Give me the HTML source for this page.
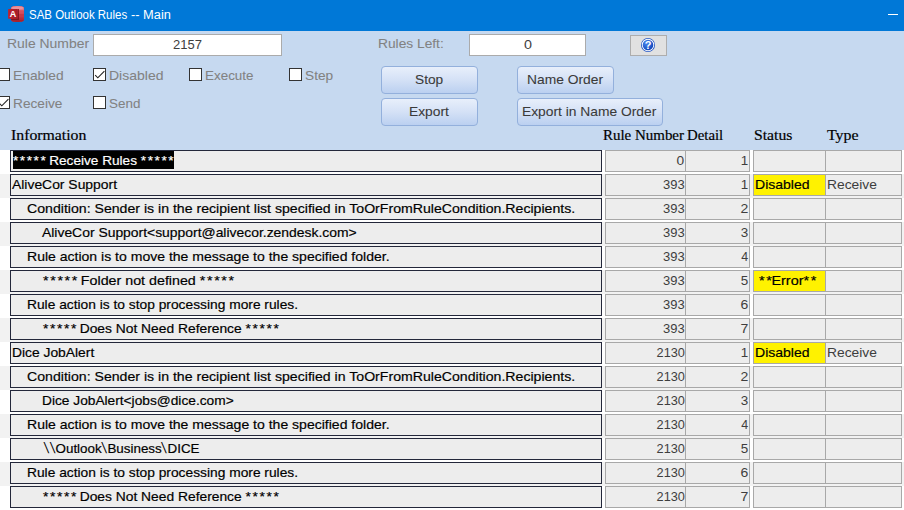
<!DOCTYPE html>
<html lang="en"><head><meta charset="utf-8"><title>SAB Outlook Rules -- Main</title>
<style>
html,body{margin:0;padding:0}
body{width:904px;height:510px;overflow:hidden;position:relative;background:#fff;font-family:'Liberation Sans',sans-serif;font-size:13px;color:#000}
.abs{position:absolute}
.t{-webkit-text-stroke:0.18px;position:absolute;white-space:pre;display:inline-block;transform-origin:0 50%;line-height:16px;height:16px}
.r{transform-origin:100% 50%}
#title{position:absolute;left:0;top:0;width:904px;height:31px;background:#0078d7}
#hdr{position:absolute;left:0;top:31px;width:904px;height:119px;background:#c6d9f0}
.lbl{color:#828282;-webkit-text-stroke:0.06px}
.inp{position:absolute;box-sizing:border-box;background:#fff;border:1px solid #ababab;height:22px;top:34px}
.cb{position:absolute;box-sizing:border-box;width:13px;height:13px;background:#fff;border:1px solid #333}
.btn{position:absolute;box-sizing:border-box;height:28px;border:1px solid #93b0dc;border-radius:4px;background:linear-gradient(#e8effb 0%,#d4e1f6 50%,#bbd0f0 100%)}
.btn .t{color:#3c3c3c}
.hs{font-family:'Liberation Serif',serif;font-size:14px;color:#000}
.stripe{position:absolute;left:0;width:904px;height:24px}
.bx{position:absolute;box-sizing:border-box;top:0;height:22px;background:#ededed}
.info{left:10px;width:592px;border:1px solid #23273a}
.num{border:1px solid #a8a8a8}
.as{letter-spacing:1.5px;margin-right:-1.9px}
.bs{display:inline-block;width:5.6px;-webkit-text-stroke:0;transform:translateX(1px) skewX(10deg) scaleY(1.18);transform-origin:1.8px 62%}
.g{color:#3e3e3e;-webkit-text-stroke:0}
.ns{-webkit-text-stroke:0}
.bt{color:#3a3a3a;-webkit-text-stroke:0.08px}
</style></head><body>
<div id="title">
<svg class="abs" style="left:7px;top:5px" width="18" height="18" viewBox="0 0 18 18">
<defs><linearGradient id="sq" x1="0" x2="1" y1="0" y2="0"><stop offset="0" stop-color="#c2222e"/><stop offset="1" stop-color="#a51b27"/></linearGradient></defs>
<path d="M4.1 3 C4.1 1.7 6.8 1 10.5 1 C14.2 1 16.9 1.7 16.9 3 V15 C16.9 16.3 14.2 17 10.5 17 C6.8 17 4.1 16.3 4.1 15 Z" fill="#c73846"/>
<path d="M4.1 3 C4.1 1.7 6.8 1 10.5 1 C14.2 1 16.9 1.7 16.9 3 V6 H4.1 Z" fill="#e27a86"/>
<ellipse cx="10.5" cy="2.9" rx="6" ry="1.5" fill="#ea939d"/>
<rect x="4.1" y="5.2" width="12.8" height="4" fill="#d64e5c"/>
<rect x="4.1" y="8.8" width="12.8" height="4" fill="#c73846"/>
<rect x="4.1" y="12.5" width="12.8" height="2.6" fill="#b72c3a"/>
<path d="M4.1 14.7 H16.9 V15 C16.9 16.3 14.2 17 10.5 17 C6.8 17 4.1 16.3 4.1 15 Z" fill="#a6232f"/>
<path d="M4.1 13.5 H10.6 V4.1 H12 V14.9 H4.1 Z" fill="#741019" opacity="0.8"/>
<rect x="1.1" y="4.1" width="9.7" height="9.6" rx="0.5" fill="url(#sq)"/>
<text x="5.95" y="12.3" font-family="Liberation Sans, sans-serif" font-weight="bold" font-size="9" fill="#fff" text-anchor="middle">A</text>
</svg>
<span class="t ns" id="ttl" style="transform:scaleX(0.9554);left:29.00px;top:7px;font-size:12px;color:#fff">SAB Outlook Rules</span><span class="t ns" id="ttl2" style="transform:scaleX(1.0687);left:131.00px;top:7px;font-size:12px;color:#fff">-- Main</span>
<div class="abs" style="left:888px;top:14px;width:10px;height:1px;background:#fff"></div>
</div>
<div id="hdr"></div>
<span class="t lbl" id="l_rn" style="transform:scaleX(1.0722);left:7.00px;top:35.5px;">Rule Number</span>
<div class="inp" style="left:93px;width:189px"></div>
<span class="t g" id="v_rn" style="transform:scaleX(1.0018);left:173.00px;top:36.5px;">2157</span>
<span class="t lbl" id="l_rl" style="transform:scaleX(1.0583);left:378.00px;top:35.5px;">Rules Left:</span>
<div class="inp" style="left:469px;width:117px"></div>
<span class="t g" id="v_rl" style="transform:scaleX(1.1042);left:524.00px;top:36.5px;">0</span>
<div class="abs" style="left:630px;top:35px;width:37px;height:21px;box-sizing:border-box;background:#e1e1e1;border:1px solid #adadad"></div>
<svg class="abs" style="left:640px;top:37px" width="16" height="16" viewBox="0 0 16 16">
<defs><radialGradient id="hg" cx="0.35" cy="0.3" r="0.8"><stop offset="0" stop-color="#4d8af0"/><stop offset="1" stop-color="#0b3fb5"/></radialGradient></defs>
<circle cx="8" cy="8" r="7" fill="#2457c5"/><circle cx="8" cy="8" r="6.2" fill="#fff"/><circle cx="8" cy="8" r="5.3" fill="url(#hg)"/>
<text x="8" y="11.9" font-family="Liberation Sans, sans-serif" font-weight="bold" font-size="11" fill="#fff" text-anchor="middle">?</text>
</svg>
<div class="cb" style="left:-3px;top:68px"></div>
<span class="t lbl" id="c_en" style="transform:scaleX(1.0620);left:13.00px;top:67.5px;">Enabled</span>
<div class="cb" style="left:93px;top:68px"><svg class="abs" style="left:0;top:0" width="11" height="11" viewBox="0 0 11 11"><path d="M1.2 6.2 L3.8 8.8 L10.4 2.2" fill="none" stroke="#222" stroke-width="1.1"/></svg></div>
<span class="t lbl" id="c_di" style="transform:scaleX(1.0769);left:109.00px;top:67.5px;">Disabled</span>
<div class="cb" style="left:189px;top:68px"></div>
<span class="t lbl" id="c_ex" style="transform:scaleX(1.0330);left:205.00px;top:67.5px;">Execute</span>
<div class="cb" style="left:289px;top:68px"></div>
<span class="t lbl" id="c_st" style="transform:scaleX(1.0524);left:305.00px;top:67.5px;">Step</span>
<div class="cb" style="left:-3px;top:96px"><svg class="abs" style="left:0;top:0" width="11" height="11" viewBox="0 0 11 11"><path d="M1.2 6.2 L3.8 8.8 L10.4 2.2" fill="none" stroke="#222" stroke-width="1.1"/></svg></div>
<span class="t lbl" id="c_re" style="transform:scaleX(1.0528);left:13.00px;top:96.0px;">Receive</span>
<div class="cb" style="left:93px;top:96px"></div>
<span class="t lbl" id="c_se" style="transform:scaleX(1.0345);left:109.00px;top:96.0px;">Send</span>
<div class="btn" style="left:381px;top:66px;width:97px"></div><span class="t bt" id="b_stop" style="transform:scaleX(1.0531);left:415.00px;top:72.0px;">Stop</span>
<div class="btn" style="left:381px;top:98px;width:97px"></div><span class="t bt" id="b_exp" style="transform:scaleX(1.0617);left:409.00px;top:104.0px;">Export</span>
<div class="btn" style="left:517px;top:66px;width:97px"></div><span class="t bt" id="b_no" style="transform:scaleX(1.0624);left:527.00px;top:72.0px;">Name Order</span>
<div class="btn" style="left:517px;top:98px;width:146px"></div><span class="t bt" id="b_eno" style="transform:scaleX(1.0623);left:522.00px;top:104.0px;">Export in Name Order</span>
<span class="t hs" id="h_info" style="transform:scaleX(1.1276);left:11.00px;top:127.5px">Information</span>
<span class="t hs" id="h_rn" style="transform:scaleX(1.0682);left:603.00px;top:127.5px">Rule Number</span>
<span class="t hs" id="h_det" style="transform:scaleX(1.0578);left:687.00px;top:127.5px">Detail</span>
<span class="t hs" id="h_sta" style="transform:scaleX(1.1212);left:754.00px;top:127.5px">Status</span>
<span class="t hs" id="h_typ" style="transform:scaleX(1.1358);left:827.00px;top:127.5px">Type</span>
<div class="stripe" style="top:150px;background:#fff">
<div class="bx info"></div>
<div class="bx num" style="left:605px;width:81px"></div><div class="bx num" style="left:685px;width:65px"></div>
<div class="bx num" style="left:753px;width:73px"></div><div class="bx num" style="left:825px;width:77px"></div>
<div class="abs" style="left:13px;top:1px;width:161px;height:18px;background:#000"></div>
<span class="t" id="i0" style="transform:scaleX(1.0480);left:13.00px;top:2.5px;color:#fff;"><span class="as">*****</span> Receive Rules <span class="as">*****</span></span>
<span class="t r g" id="n0" style="transform:scaleX(1.0562);right:220.00px;top:2.5px">0</span>
<span class="t r g" id="d0" style="transform:scaleX(1.0283);right:156.00px;top:2.5px">1</span>
</div>
<div class="stripe" style="top:174px;background:#f2f2f2">
<div class="bx info"></div>
<div class="bx num" style="left:605px;width:81px"></div><div class="bx num" style="left:685px;width:65px"></div>
<div class="bx num" style="left:753px;width:73px"></div><div class="bx num" style="left:825px;width:77px"></div>
<span class="t" id="i1" style="transform:scaleX(1.0687);left:12.00px;top:2.5px;">AliveCor Support</span>
<span class="t r g" id="n1" style="transform:scaleX(0.9979);right:219.00px;top:2.5px">393</span>
<span class="t r g" id="d1" style="transform:scaleX(1.0283);right:156.00px;top:2.5px">1</span>
<div class="abs" style="left:754px;top:1px;width:71px;height:20px;background:#fff200"></div>
<span class="t" id="s1" style="transform:scaleX(1.0790);left:755.00px;top:2.5px">Disabled</span>
<span class="t g" id="y1" style="transform:scaleX(1.0627);left:827.00px;top:2.5px">Receive</span>
</div>
<div class="stripe" style="top:198px;background:#fff">
<div class="bx info"></div>
<div class="bx num" style="left:605px;width:81px"></div><div class="bx num" style="left:685px;width:65px"></div>
<div class="bx num" style="left:753px;width:73px"></div><div class="bx num" style="left:825px;width:77px"></div>
<span class="t" id="i2" style="transform:scaleX(1.0858);left:27.00px;top:2.5px;">Condition: Sender is in the recipient list specified in ToOrFromRuleCondition.Recipients.</span>
<span class="t r g" id="n2" style="transform:scaleX(0.9979);right:219.00px;top:2.5px">393</span>
<span class="t r g" id="d2" style="transform:scaleX(1.0791);right:156.00px;top:2.5px">2</span>
</div>
<div class="stripe" style="top:222px;background:#f2f2f2">
<div class="bx info"></div>
<div class="bx num" style="left:605px;width:81px"></div><div class="bx num" style="left:685px;width:65px"></div>
<div class="bx num" style="left:753px;width:73px"></div><div class="bx num" style="left:825px;width:77px"></div>
<span class="t" id="i3" style="transform:scaleX(1.0691);left:42.00px;top:2.5px;">AliveCor Support&lt;support@alivecor.zendesk.com&gt;</span>
<span class="t r g" id="n3" style="transform:scaleX(0.9979);right:219.00px;top:2.5px">393</span>
<span class="t r g" id="d3" style="transform:scaleX(1.0324);right:156.00px;top:2.5px">3</span>
</div>
<div class="stripe" style="top:246px;background:#fff">
<div class="bx info"></div>
<div class="bx num" style="left:605px;width:81px"></div><div class="bx num" style="left:685px;width:65px"></div>
<div class="bx num" style="left:753px;width:73px"></div><div class="bx num" style="left:825px;width:77px"></div>
<span class="t" id="i4" style="transform:scaleX(1.0790);left:27.00px;top:2.5px;">Rule action is to move the message to the specified folder.</span>
<span class="t r g" id="n4" style="transform:scaleX(0.9979);right:219.00px;top:2.5px">393</span>
<span class="t r g" id="d4" style="transform:scaleX(0.9546);right:156.00px;top:2.5px">4</span>
</div>
<div class="stripe" style="top:270px;background:#f2f2f2">
<div class="bx info"></div>
<div class="bx num" style="left:605px;width:81px"></div><div class="bx num" style="left:685px;width:65px"></div>
<div class="bx num" style="left:753px;width:73px"></div><div class="bx num" style="left:825px;width:77px"></div>
<span class="t" id="i5" style="transform:scaleX(1.0968);left:43.00px;top:2.5px;"><span class="as">*****</span> Folder not defined <span class="as">*****</span></span>
<span class="t r g" id="n5" style="transform:scaleX(0.9979);right:219.00px;top:2.5px">393</span>
<span class="t r g" id="d5" style="transform:scaleX(1.0324);right:156.00px;top:2.5px">5</span>
<div class="abs" style="left:754px;top:1px;width:71px;height:20px;background:#fff200"></div>
<span class="t" id="s5" style="transform:scaleX(1.1073);left:759.00px;top:2.5px"><span class="as">**</span>Error<span class="as">**</span></span>
</div>
<div class="stripe" style="top:294px;background:#fff">
<div class="bx info"></div>
<div class="bx num" style="left:605px;width:81px"></div><div class="bx num" style="left:685px;width:65px"></div>
<div class="bx num" style="left:753px;width:73px"></div><div class="bx num" style="left:825px;width:77px"></div>
<span class="t" id="i6" style="transform:scaleX(1.0597);left:27.00px;top:2.5px;">Rule action is to stop processing more rules.</span>
<span class="t r g" id="n6" style="transform:scaleX(0.9979);right:219.00px;top:2.5px">393</span>
<span class="t r g" id="d6" style="transform:scaleX(1.0755);right:156.00px;top:2.5px">6</span>
</div>
<div class="stripe" style="top:318px;background:#f2f2f2">
<div class="bx info"></div>
<div class="bx num" style="left:605px;width:81px"></div><div class="bx num" style="left:685px;width:65px"></div>
<div class="bx num" style="left:753px;width:73px"></div><div class="bx num" style="left:825px;width:77px"></div>
<span class="t" id="i7" style="transform:scaleX(1.0627);left:43.00px;top:2.5px;"><span class="as">*****</span> Does Not Need Reference <span class="as">*****</span></span>
<span class="t r g" id="n7" style="transform:scaleX(0.9979);right:219.00px;top:2.5px">393</span>
<span class="t r g" id="d7" style="transform:scaleX(1.0791);right:156.00px;top:2.5px">7</span>
</div>
<div class="stripe" style="top:342px;background:#fff">
<div class="bx info"></div>
<div class="bx num" style="left:605px;width:81px"></div><div class="bx num" style="left:685px;width:65px"></div>
<div class="bx num" style="left:753px;width:73px"></div><div class="bx num" style="left:825px;width:77px"></div>
<span class="t" id="i8" style="transform:scaleX(1.0636);left:12.00px;top:2.5px;">Dice JobAlert</span>
<span class="t r g" id="n8" style="transform:scaleX(0.9802);right:219.00px;top:2.5px">2130</span>
<span class="t r g" id="d8" style="transform:scaleX(1.0283);right:156.00px;top:2.5px">1</span>
<div class="abs" style="left:754px;top:1px;width:71px;height:20px;background:#fff200"></div>
<span class="t" id="s8" style="transform:scaleX(1.0790);left:755.00px;top:2.5px">Disabled</span>
<span class="t g" id="y8" style="transform:scaleX(1.0627);left:827.00px;top:2.5px">Receive</span>
</div>
<div class="stripe" style="top:366px;background:#f2f2f2">
<div class="bx info"></div>
<div class="bx num" style="left:605px;width:81px"></div><div class="bx num" style="left:685px;width:65px"></div>
<div class="bx num" style="left:753px;width:73px"></div><div class="bx num" style="left:825px;width:77px"></div>
<span class="t" id="i9" style="transform:scaleX(1.0858);left:27.00px;top:2.5px;">Condition: Sender is in the recipient list specified in ToOrFromRuleCondition.Recipients.</span>
<span class="t r g" id="n9" style="transform:scaleX(0.9802);right:219.00px;top:2.5px">2130</span>
<span class="t r g" id="d9" style="transform:scaleX(1.0791);right:156.00px;top:2.5px">2</span>
</div>
<div class="stripe" style="top:390px;background:#fff">
<div class="bx info"></div>
<div class="bx num" style="left:605px;width:81px"></div><div class="bx num" style="left:685px;width:65px"></div>
<div class="bx num" style="left:753px;width:73px"></div><div class="bx num" style="left:825px;width:77px"></div>
<span class="t" id="i10" style="transform:scaleX(1.0556);left:42.00px;top:2.5px;">Dice JobAlert&lt;jobs@dice.com&gt;</span>
<span class="t r g" id="n10" style="transform:scaleX(0.9802);right:219.00px;top:2.5px">2130</span>
<span class="t r g" id="d10" style="transform:scaleX(1.0324);right:156.00px;top:2.5px">3</span>
</div>
<div class="stripe" style="top:414px;background:#f2f2f2">
<div class="bx info"></div>
<div class="bx num" style="left:605px;width:81px"></div><div class="bx num" style="left:685px;width:65px"></div>
<div class="bx num" style="left:753px;width:73px"></div><div class="bx num" style="left:825px;width:77px"></div>
<span class="t" id="i11" style="transform:scaleX(1.0790);left:27.00px;top:2.5px;">Rule action is to move the message to the specified folder.</span>
<span class="t r g" id="n11" style="transform:scaleX(0.9802);right:219.00px;top:2.5px">2130</span>
<span class="t r g" id="d11" style="transform:scaleX(0.9546);right:156.00px;top:2.5px">4</span>
</div>
<div class="stripe" style="top:438px;background:#fff">
<div class="bx info"></div>
<div class="bx num" style="left:605px;width:81px"></div><div class="bx num" style="left:685px;width:65px"></div>
<div class="bx num" style="left:753px;width:73px"></div><div class="bx num" style="left:825px;width:77px"></div>
<span class="t" id="i12" style="transform:scaleX(1.0299);left:44.00px;top:2.5px;"><span class="bs">\</span><span class="bs">\</span>Outlook<span class="bs">\</span>Business<span class="bs">\</span>DICE</span>
<span class="t r g" id="n12" style="transform:scaleX(0.9802);right:219.00px;top:2.5px">2130</span>
<span class="t r g" id="d12" style="transform:scaleX(1.0324);right:156.00px;top:2.5px">5</span>
</div>
<div class="stripe" style="top:462px;background:#f2f2f2">
<div class="bx info"></div>
<div class="bx num" style="left:605px;width:81px"></div><div class="bx num" style="left:685px;width:65px"></div>
<div class="bx num" style="left:753px;width:73px"></div><div class="bx num" style="left:825px;width:77px"></div>
<span class="t" id="i13" style="transform:scaleX(1.0597);left:27.00px;top:2.5px;">Rule action is to stop processing more rules.</span>
<span class="t r g" id="n13" style="transform:scaleX(0.9802);right:219.00px;top:2.5px">2130</span>
<span class="t r g" id="d13" style="transform:scaleX(1.0755);right:156.00px;top:2.5px">6</span>
</div>
<div class="stripe" style="top:486px;background:#fff">
<div class="bx info"></div>
<div class="bx num" style="left:605px;width:81px"></div><div class="bx num" style="left:685px;width:65px"></div>
<div class="bx num" style="left:753px;width:73px"></div><div class="bx num" style="left:825px;width:77px"></div>
<span class="t" id="i14" style="transform:scaleX(1.0627);left:43.00px;top:2.5px;"><span class="as">*****</span> Does Not Need Reference <span class="as">*****</span></span>
<span class="t r g" id="n14" style="transform:scaleX(0.9802);right:219.00px;top:2.5px">2130</span>
<span class="t r g" id="d14" style="transform:scaleX(1.0791);right:156.00px;top:2.5px">7</span>
</div>
</body></html>
